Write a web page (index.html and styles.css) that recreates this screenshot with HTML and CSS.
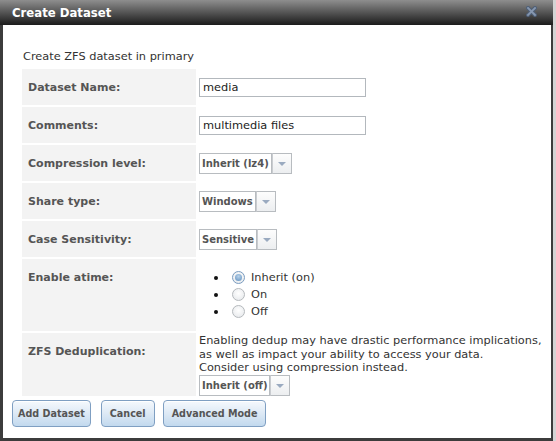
FILE: index.html
```html
<!DOCTYPE html>
<html>
<head>
<meta charset="utf-8">
<link rel="stylesheet" href="styles.css">
</head>
<body>
<div class="dialog">
  <div class="titlebar">
    <span class="title">Create Dataset</span>
    <svg class="close" width="11" height="11" viewBox="0 0 11 11">
      <path d="M2 2 L9 9 M9 2 L2 9" stroke="#4f5f76" stroke-width="4" stroke-linecap="square"/>
      <path d="M2 2 L9 9 M9 2 L2 9" stroke="#8798b0" stroke-width="1.8" stroke-linecap="square"/>
    </svg>
  </div>
  <div class="content">
    <p class="intro">Create ZFS dataset in primary</p>
    <table class="form">
      <tr>
        <th>Dataset Name:</th>
        <td><div class="textbox">media</div></td>
      </tr>
      <tr>
        <th>Comments:</th>
        <td><div class="textbox">multimedia files</div></td>
      </tr>
      <tr>
        <th>Compression level:</th>
        <td><div class="select"><span class="sel-text">Inherit (lz4)</span><span class="sel-arrow"></span></div></td>
      </tr>
      <tr>
        <th>Share type:</th>
        <td><div class="select"><span class="sel-text">Windows</span><span class="sel-arrow"></span></div></td>
      </tr>
      <tr>
        <th>Case Sensitivity:</th>
        <td><div class="select"><span class="sel-text">Sensitive</span><span class="sel-arrow"></span></div></td>
      </tr>
      <tr>
        <th>Enable atime:</th>
        <td>
          <ul class="radios">
            <li><span class="radio checked"></span>Inherit (on)</li>
            <li><span class="radio"></span>On</li>
            <li><span class="radio"></span>Off</li>
          </ul>
        </td>
      </tr>
      <tr>
        <th>ZFS Deduplication:</th>
        <td class="dedup">
          <div class="help">Enabling dedup may have drastic performance implications,<br>as well as impact your ability to access your data.<br>Consider using compression instead.</div>
          <div class="select"><span class="sel-text">Inherit (off)</span><span class="sel-arrow"></span></div>
        </td>
      </tr>
    </table>
    <div class="actions">
      <button class="btn btn-add">Add Dataset</button>
      <button class="btn btn-cancel">Cancel</button>
      <button class="btn">Advanced Mode</button>
    </div>
  </div>
</div>
</body>
</html>
```

FILE: styles.css
```css
html, body {
  margin: 0;
  padding: 0;
  background: #d4d4d4;
}
body {
  font-family: "DejaVu Sans", Verdana, sans-serif;
  font-size: 11.35px;
  color: #333;
}
.dialog {
  width: 548px;
  height: 438px;
  background: #fff;
  border-left: 3px solid #3c3c3c;
  border-right: 2px solid #3c3c3c;
  border-bottom: 3px solid #3c3c3c;
  display: flex;
  flex-direction: column;
}
.titlebar {
  height: 25px;
  margin-left: -3px;
  margin-right: -2px;
  background: linear-gradient(#8e8e8e, #5a5a5a 45%, #262626 90%, #1c1c1c);
  display: flex;
  align-items: center;
  justify-content: space-between;
  padding: 0 16px 0 12px;
}
.title {
  color: #fff;
  font-weight: bold;
  font-size: 11.7px;
  padding-top: 1px;
}
.close {
  display: block;
  margin-top: -2px;
}
.content {
  flex: 1;
  display: flex;
  flex-direction: column;
}
.intro {
  margin: 24px 0 4px 20px;
  line-height: 14px;
}
.form {
  margin-left: 17px;
  border-spacing: 2px;
  width: 530px;
}
.form th {
  width: 163px;
  background: #f3f3f3;
  color: #555;
  font-weight: bold;
  font-size: 11px;
  text-align: left;
  vertical-align: top;
  padding: 12px 5px 10px 6px;
  line-height: 14px;
  white-space: nowrap;
}
.form td {
  vertical-align: middle;
  padding: 0 0 0 1px;
}
.textbox {
  width: 162px;
  height: 17px;
  line-height: 17px;
  border: 1px solid #b3b8bd;
  padding: 0 0 0 3px;
  color: #222;
}
.select {
  display: inline-flex;
  height: 21px;
  vertical-align: top;
}
.sel-text {
  border: 1px solid #b8bcc0;
  padding: 0 2px 0 2px;
  line-height: 19px;
  font-weight: bold;
  color: #555;
  font-size: 10px;
}
.sel-arrow {
  width: 18px;
  border: 1px solid #b8bcc0;
  border-left: 1px solid #c9ccd0;
  background: linear-gradient(#fdfdfd, #eceef0);
  position: relative;
}
.sel-arrow::after {
  content: "";
  position: absolute;
  left: 5px;
  top: 8px;
  border-left: 4px solid transparent;
  border-right: 4px solid transparent;
  border-top: 4px solid #9aaac0;
}
.radios {
  margin: 0;
  padding: 10px 0 11px 15px;
  list-style: none;
}
.radios li {
  line-height: 17px;
  display: flex;
  align-items: center;
}
.radios li::before {
  content: "";
  width: 4px;
  height: 4px;
  border-radius: 50%;
  background: #111;
  margin-right: 14px;
}
.radio {
  display: inline-block;
  width: 11px;
  height: 11px;
  border: 1px solid #b5b9bd;
  border-radius: 50%;
  background: radial-gradient(circle at 50% 40%, #ffffff, #e3e6e9);
  margin-right: 6px;
  position: relative;
}
.radio.checked {
  border-color: #7a9cc0;
}
.radio.checked::after {
  content: "";
  position: absolute;
  left: 2px;
  top: 2px;
  width: 7px;
  height: 7px;
  border-radius: 50%;
  background: radial-gradient(circle at 50% 35%, #b8d2ea, #5f8fbe);
}
.dedup {
  padding-top: 1px !important;
}
.help {
  line-height: 13.5px;
  color: #333;
}
.actions {
  display: flex;
  gap: 8px;
  padding: 2px 0 0 9px;
}
.btn {
  font-family: "DejaVu Sans", Verdana, sans-serif;
  font-size: 9.6px;
  font-weight: bold;
  color: #555;
  height: 27px;
  padding: 0 8px;
  border: 1px solid #7f9fc2;
  border-radius: 4px;
  background: linear-gradient(#f5f9fd, #dde9f5 50%, #c2d9ee);
  box-shadow: inset 0 1px 0 #fff;
}
.btn-add {
  padding: 0 5px;
  margin-right: 2px;
}
```
